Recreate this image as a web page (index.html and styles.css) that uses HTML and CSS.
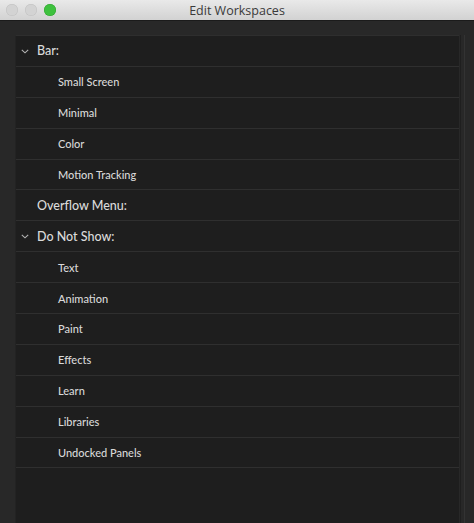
FILE: index.html
```html
<!DOCTYPE html>
<html>
<head>
<meta charset="utf-8">
<link rel="stylesheet" href="styles.css">
</head>
<body>
<div class="window">
  <div class="titlebar">
    <div class="lights">
      <span class="light grey"></span>
      <span class="light grey"></span>
      <span class="light green"></span>
    </div>
    <div class="title">Edit Workspaces</div>
  </div>
  <div class="content">
    <div class="panel">
      <div class="row group">
        <svg class="chev" width="8" height="5" viewBox="0 0 8 5"><path d="M0.8 0.8 L4 3.8 L7.2 0.8" fill="none" stroke="#b5b5b5" stroke-width="1.1"/></svg>
        <span>Bar:</span>
      </div>
      <div class="row item">Small Screen</div>
      <div class="row item">Minimal</div>
      <div class="row item">Color</div>
      <div class="row item">Motion Tracking</div>
      <div class="row group">
        <span class="chev-space"></span>
        <span>Overflow Menu:</span>
      </div>
      <div class="row group">
        <svg class="chev" width="8" height="5" viewBox="0 0 8 5"><path d="M0.8 0.8 L4 3.8 L7.2 0.8" fill="none" stroke="#b5b5b5" stroke-width="1.1"/></svg>
        <span>Do Not Show:</span>
      </div>
      <div class="row item">Text</div>
      <div class="row item">Animation</div>
      <div class="row item">Paint</div>
      <div class="row item">Effects</div>
      <div class="row item">Learn</div>
      <div class="row item">Libraries</div>
      <div class="row item">Undocked Panels</div>
    </div>
    <div class="sidebar"></div>
  </div>
</div>
</body>
</html>
```

FILE: styles.css
```css
html, body {
  margin: 0;
  padding: 0;
  background: #282828;
}
.window {
  width: 474px;
  height: 523px;
  display: flex;
  flex-direction: column;
  font-family: Lato, "Open Sans", sans-serif;
  overflow: hidden;
}
.titlebar {
  height: 20px;
  flex: none;
  background: linear-gradient(#e9e9e9, #d2d2d2);
  border-bottom: 1px solid #1b1b1b;
  display: flex;
  align-items: center;
  position: relative;
}
.lights {
  display: flex;
  gap: 7px;
  padding-left: 6px;
}
.light {
  width: 12px;
  height: 12px;
  border-radius: 50%;
  display: block;
}
.light.grey {
  background: #d3d3d3;
  box-shadow: inset 0 0 0 0.5px #c0c0c0;
}
.light.green {
  background: #3ec13e;
  box-shadow: inset 0 0 0 0.5px #2fa22f;
}
.title {
  position: absolute;
  left: 0;
  right: 0;
  top: 0;
  bottom: 0;
  text-align: center;
  line-height: 21px;
  font-family: "Open Sans", Lato, sans-serif;
  font-size: 12.5px;
  color: #3a3a3a;
}
.content {
  flex: 1;
  display: flex;
  padding: 14px 0 0 15px;
  min-height: 0;
}
.panel {
  width: 443px;
  background: #1e1e1e;
  border-top: 1px solid #2e2e2e;
  border-left: 1px solid #232323;
  display: flex;
  flex-direction: column;
}
.sidebar {
  width: 3px;
  margin-left: 1px;
  margin-top: 0;
  border-left: 1px solid #1f1f1f;
  border-right: 1px solid #333;
}
.row {
  height: 29.9px;
  flex: none;
  border-bottom: 1px solid #2f2f2f;
  display: flex;
  align-items: center;
  color: #dadada;
  font-weight: 500;
}
.group {
  font-size: 12.5px;
  padding-left: 5px;
}
.chev {
  width: 8px;
  height: 5px;
  margin-right: 8px;
  margin-top: 1px;
}
.chev-space {
  width: 8px;
  margin-right: 8px;
}
.item {
  font-size: 11px;
  padding-left: 42px;
  color: #d8d8d8;
}
```
